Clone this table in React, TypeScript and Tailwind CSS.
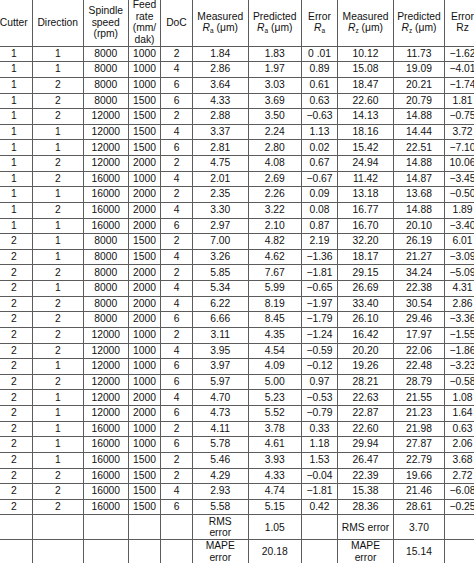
const rows: string[][] = [
  ["1", "1", "8000", "1000", "2", "1.84", "1.83", "0 .01", "10.12", "11.73", "−1.62"],
  ["1", "1", "8000", "1000", "4", "2.86", "1.97", "0.89", "15.08", "19.09", "−4.01"],
  ["1", "2", "8000", "1000", "6", "3.64", "3.03", "0.61", "18.47", "20.21", "−1.74"],
  ["1", "2", "8000", "1500", "6", "4.33", "3.69", "0.63", "22.60", "20.79", "1.81"],
  ["1", "2", "12000", "1500", "2", "2.88", "3.50", "−0.63", "14.13", "14.88", "−0.75"],
  ["1", "1", "12000", "1500", "4", "3.37", "2.24", "1.13", "18.16", "14.44", "3.72"],
  ["1", "1", "12000", "1500", "6", "2.81", "2.80", "0.02", "15.42", "22.51", "−7.10"],
  ["1", "2", "12000", "2000", "2", "4.75", "4.08", "0.67", "24.94", "14.88", "10.06"],
  ["1", "2", "16000", "1000", "4", "2.01", "2.69", "−0.67", "11.42", "14.87", "−3.45"],
  ["1", "1", "16000", "2000", "2", "2.35", "2.26", "0.09", "13.18", "13.68", "−0.50"],
  ["1", "2", "16000", "2000", "4", "3.30", "3.22", "0.08", "16.77", "14.88", "1.89"],
  ["1", "1", "16000", "2000", "6", "2.97", "2.10", "0.87", "16.70", "20.10", "−3.40"],
  ["2", "1", "8000", "1500", "2", "7.00", "4.82", "2.19", "32.20", "26.19", "6.01"],
  ["2", "1", "8000", "1500", "4", "3.26", "4.62", "−1.36", "18.17", "21.27", "−3.09"],
  ["2", "2", "8000", "2000", "2", "5.85", "7.67", "−1.81", "29.15", "34.24", "−5.09"],
  ["2", "1", "8000", "2000", "4", "5.34", "5.99", "−0.65", "26.69", "22.38", "4.31"],
  ["2", "2", "8000", "2000", "4", "6.22", "8.19", "−1.97", "33.40", "30.54", "2.86"],
  ["2", "2", "8000", "2000", "6", "6.66", "8.45", "−1.79", "26.10", "29.46", "−3.36"],
  ["2", "2", "12000", "1000", "2", "3.11", "4.35", "−1.24", "16.42", "17.97", "−1.55"],
  ["2", "2", "12000", "1000", "4", "3.95", "4.54", "−0.59", "20.20", "22.06", "−1.86"],
  ["2", "1", "12000", "1000", "6", "3.97", "4.09", "−0.12", "19.26", "22.48", "−3.23"],
  ["2", "2", "12000", "1000", "6", "5.97", "5.00", "0.97", "28.21", "28.79", "−0.58"],
  ["2", "1", "12000", "2000", "4", "4.70", "5.23", "−0.53", "22.63", "21.55", "1.08"],
  ["2", "1", "12000", "2000", "6", "4.73", "5.52", "−0.79", "22.87", "21.23", "1.64"],
  ["2", "1", "16000", "1000", "2", "4.11", "3.78", "0.33", "22.60", "21.98", "0.63"],
  ["2", "1", "16000", "1000", "6", "5.78", "4.61", "1.18", "29.94", "27.87", "2.06"],
  ["2", "1", "16000", "1500", "2", "5.46", "3.93", "1.53", "26.47", "22.79", "3.68"],
  ["2", "2", "16000", "1500", "2", "4.29", "4.33", "−0.04", "22.39", "19.66", "2.72"],
  ["2", "2", "16000", "1500", "4", "2.93", "4.74", "−1.81", "15.38", "21.46", "−6.08"],
  ["2", "2", "16000", "1500", "6", "5.58", "5.15", "0.42", "28.36", "28.61", "−0.25"],
]

const cell = "border border-[#5c5c5c] p-0 align-middle"

function R({ sub }: { sub: string }) {
  return (
    <>
      <i>R</i>
      <sub className="text-[6.5px] not-italic">{sub}</sub>
    </>
  )
}

export default function App() {
  return (
    <div className="w-[474px] h-[563px] overflow-hidden bg-white">
      <table className="table-fixed border-collapse ml-[-5.5px] mt-[-2.3px] w-[486px] text-center text-[10.3px] text-[#111] font-['Liberation_Sans',Arial,sans-serif]">
        <colgroup>
          <col className="w-[37.5px]" />
          <col className="w-[50.5px]" />
          <col className="w-[45.5px]" />
          <col className="w-[32px]" />
          <col className="w-[32px]" />
          <col className="w-[55.5px]" />
          <col className="w-[53.5px]" />
          <col className="w-[36px]" />
          <col className="w-[56px]" />
          <col className="w-[51px]" />
          <col className="w-[36px]" />
        </colgroup>
        <thead>
          <tr className="h-[48px] leading-[11.4px]">
            <th className={`${cell} font-normal`}>Cutter</th>
            <th className={`${cell} font-normal`}>Direction</th>
            <th className={`${cell} font-normal`}>
              Spindle
              <br />
              speed
              <br />
              (rpm)
            </th>
            <th className={`${cell} font-normal`}>
              Feed
              <br />
              rate
              <br />
              (mm/
              <br />
              dak)
            </th>
            <th className={`${cell} font-normal`}>DoC</th>
            <th className={`${cell} font-normal`}>
              Measured
              <br />
              <R sub="a" /> (μm)
            </th>
            <th className={`${cell} font-normal`}>
              Predicted
              <br />
              <R sub="a" /> (μm)
            </th>
            <th className={`${cell} font-normal`}>
              Error
              <br />
              <R sub="a" />
            </th>
            <th className={`${cell} font-normal`}>
              Measured
              <br />
              <R sub="z" /> (μm)
            </th>
            <th className={`${cell} font-normal`}>
              Predicted
              <br />
              <R sub="z" /> (μm)
            </th>
            <th className={`${cell} font-normal`}>
              Error
              <br />
              Rz
            </th>
          </tr>
        </thead>
        <tbody>
          {rows.map((r, i) => (
            <tr key={i} className="h-[15.64px] leading-none">
              {r.map((v, j) => (
                <td key={j} className={cell}>
                  {v}
                </td>
              ))}
            </tr>
          ))}
          <tr className="h-[25px] leading-[11.5px]">
            <td className={cell}></td>
            <td className={cell}></td>
            <td className={cell}></td>
            <td className={cell}></td>
            <td className={cell}></td>
            <td className={cell}>
              RMS
              <br />
              error
            </td>
            <td className={cell}>1.05</td>
            <td className={cell}></td>
            <td className={cell}>RMS error</td>
            <td className={cell}>3.70</td>
            <td className={cell}></td>
          </tr>
          <tr className="h-[24px] leading-[11.5px]">
            <td className={cell}></td>
            <td className={cell}></td>
            <td className={cell}></td>
            <td className={cell}></td>
            <td className={cell}></td>
            <td className={cell}>
              MAPE
              <br />
              error
            </td>
            <td className={cell}>20.18</td>
            <td className={cell}></td>
            <td className={cell}>
              MAPE
              <br />
              error
            </td>
            <td className={cell}>15.14</td>
            <td className={cell}></td>
          </tr>
        </tbody>
      </table>
    </div>
  )
}
